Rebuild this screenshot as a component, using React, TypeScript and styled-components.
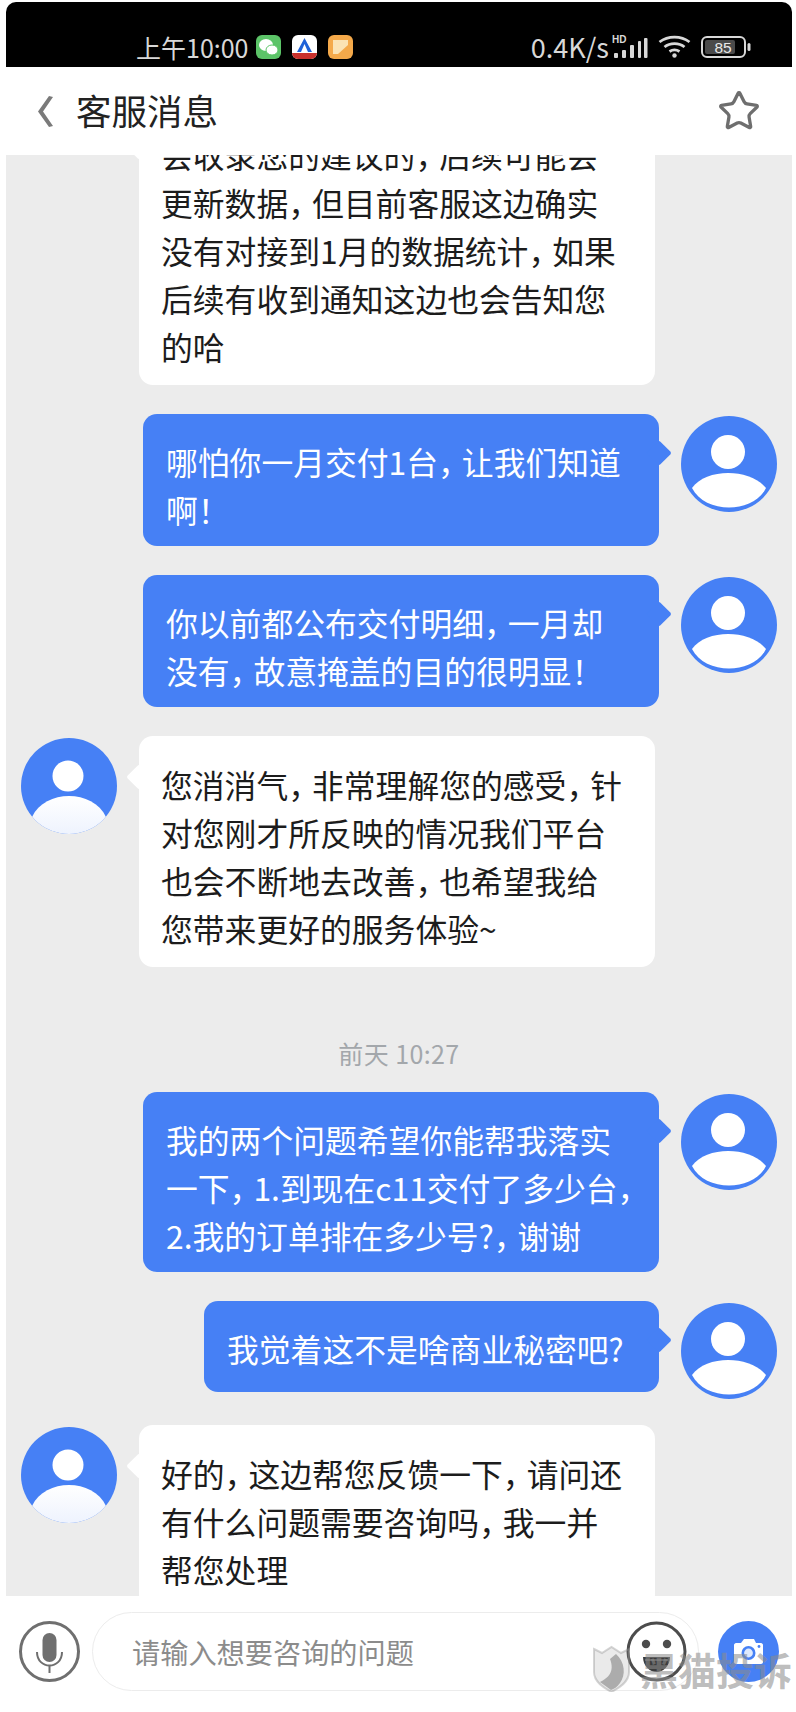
import React from 'react';
import styled, { createGlobalStyle } from 'styled-components';
import { Star } from 'lucide-react';

const GlobalStyle = createGlobalStyle`
  html, body {
    margin: 0;
    padding: 0;
    background: #fff;
  }
  * {
    box-sizing: border-box;
  }
`;

const FONT = `"Noto Sans CJK SC", "Noto Sans", sans-serif`;
const BLUE = '#4680f5';

const Page = styled.div`
  position: relative;
  width: 796px;
  height: 1712px;
  padding: 2px 4px 0 6px;
  display: flex;
  flex-direction: column;
  overflow: hidden;
  background: #fff;
  font-family: ${FONT};
`;
const StatusBar = styled.div`
  height: 65px;
  flex-shrink: 0;
  padding: 24px 41px 0 130px;
  display: flex;
  align-items: center;
  background: #000;
  border-radius: 10px 10px 0 0;
  color: #d8d8d8;
`;
const Clock = styled.span`
  font-size: 25px;
  line-height: 34px;
`;
const AppIcons = styled.div`
  display: flex;
  gap: 11px;
  margin-left: 8px;
`;
const AppIcon = styled.div<{ $bg: string }>`
  width: 25px;
  height: 24px;
  border-radius: 6px;
  background: ${p => p.$bg};
  overflow: hidden;
`;
const StatusRight = styled.div`
  margin-left: auto;
  display: flex;
  align-items: center;
  gap: 10px;
`;
const Speed = styled.span`
  margin-right: -7px;
  font-size: 27px;
  line-height: 34px;
`;
const Header = styled.div`
  height: 88px;
  flex-shrink: 0;
  padding: 0 31px 0 32px;
  display: flex;
  align-items: center;
  background: #fff;
`;
const Title = styled.h1`
  margin: 0 auto 2px 23px;
  font-size: 35.5px;
  line-height: 48px;
  font-weight: 400;
  color: #222;
`;
const Chat = styled.div`
  flex: 1;
  min-height: 0;
  overflow: hidden;
  background: #ececec;
`;
const MessageList = styled.div`
  margin-top: -49px;
  padding: 0 15px;
  display: flex;
  flex-direction: column;
  gap: 29px;
`;
const Row = styled.div<{ $mine?: boolean }>`
  display: flex;
  flex-direction: ${p => (p.$mine ? 'row-reverse' : 'row')};
  align-items: flex-start;
  gap: 22px;
`;
const AvatarSlot = styled.div`
  width: 96px;
  height: 96px;
  margin: 2px 0 -3px;
  flex-shrink: 0;
`;
const Bubble = styled.div<{ $mine?: boolean; $short?: boolean }>`
  position: relative;
  width: ${p => (p.$short ? '455px' : '516px')};
  min-height: 91px;
  padding: ${p => (p.$mine ? '23px 23px 13px' : '24px 22px 15px')};
  border-radius: 14px;
  background: ${p => (p.$mine ? BLUE : '#fff')};
  color: ${p => (p.$mine ? '#fff' : '#1c1c1c')};
  font-size: 31.8px;
  line-height: 48px;
  white-space: nowrap;

  &::after {
    content: '';
    position: absolute;
    top: ${p => (p.$mine ? '30px' : '32px')};
    ${p => (p.$mine ? 'right: -9px;' : 'left: -9px;')}
    width: 18px;
    height: 18px;
    background: inherit;
    transform: rotate(45deg);
    border-radius: 2px;
  }
`;
const Line = styled.div``;
const Comma = styled.span`
  letter-spacing: -8px;
`;
const TimeStamp = styled.div`
  margin-top: 47px;
  text-align: center;
  font-size: 25px;
  line-height: 20px;
  color: #a3a7ab;
  letter-spacing: 0.4px;
`;
const InputBar = styled.div`
  height: 116px;
  flex-shrink: 0;
  padding: 16px 0 0 13px;
  display: flex;
  align-items: flex-start;
  background: #fff;
`;
const RoundIcon = styled.div`
  width: 61px;
  height: 61px;
  margin-top: 9px;
  flex-shrink: 0;
`;
const InputPill = styled.div`
  position: relative;
  width: 607px;
  height: 79px;
  margin: 0 19px 0 12px;
  padding-left: 39px;
  display: flex;
  align-items: center;
  border: 1px solid #ececec;
  border-radius: 40px;
  background: #fff;
  font-size: 28.2px;
  color: #8c8c8c;
`;
const EmojiSlot = styled.div`
  position: absolute;
  top: 8px;
  right: 11px;
  width: 61px;
  height: 61px;
`;
const Watermark = styled.div`
  position: absolute;
  left: 593px;
  top: 1645px;
  display: flex;
  align-items: center;
  gap: 10px;
  color: rgba(140, 140, 140, 0.58);
  font-size: 38px;
  font-weight: 700;
  line-height: 47px;
  white-space: nowrap;
`;

const Avatar = ({ mine }: { mine?: boolean }) => {
  const id = mine ? 'fade-mine' : 'fade-agent';
  return (
    <svg width="96" height="96" viewBox="0 0 96 96">
      <defs>
        <linearGradient id={id} x1="0" y1="0" x2="0" y2="1">
          <stop offset="0" stopColor="#fff" />
          <stop offset="1" stopColor={mine ? '#fff' : '#eef3fe'} />
        </linearGradient>
        <clipPath id={`${id}-clip`}>
          <circle cx="48" cy="48" r="48" />
        </clipPath>
      </defs>
      <circle cx="48" cy="48" r="48" fill={BLUE} />
      {mine ? (
        <>
          <circle cx="47" cy="36" r="17" fill="#fff" />
          <path d="M11 72 C25 52 69 52 85 72 C72 98 24 98 11 72 Z" fill={`url(#${id})`} />
        </>
      ) : (
        <>
          <circle cx="47" cy="38" r="15.5" fill="#fff" />
          <path
            d="M11 79 C24 51 72 51 85 79 L85 96 L11 96 Z"
            fill={`url(#${id})`}
            clipPath={`url(#${id}-clip)`}
          />
        </>
      )}
    </svg>
  );
};

// the reference's font sets the full-width comma tighter than Noto does
const renderLine = (line: string) =>
  line.split('，').map((part, i) => (
    <React.Fragment key={i}>
      {i > 0 && <Comma>，</Comma>}
      {part}
    </React.Fragment>
  ));

const Message = ({ lines, mine, short, noAvatar }: { lines: string[]; mine?: boolean; short?: boolean; noAvatar?: boolean }) => (
  <Row $mine={mine}>
    <AvatarSlot>{!noAvatar && <Avatar mine={mine} />}</AvatarSlot>
    <Bubble $mine={mine} $short={short}>
      {lines.map(l => (
        <Line key={l}>{renderLine(l)}</Line>
      ))}
    </Bubble>
  </Row>
);

const Signal = () => (
  <svg width="36" height="24" viewBox="0 0 36 24" fill="#d8d8d8">
    <text x="0" y="8" fontSize="10" fontFamily="Liberation Sans, sans-serif" fontWeight="700">HD</text>
    <rect x="2" y="18" width="4" height="5" rx="1" />
    <rect x="10" y="15" width="4" height="8" rx="1" />
    <rect x="18" y="10" width="4" height="13" rx="1" />
    <rect x="26" y="6" width="3" height="17" rx="1" />
    <rect x="32" y="3" width="3.5" height="20" rx="1" />
  </svg>
);

const Wifi = () => (
  <svg width="33" height="23" viewBox="0 0 33 23" fill="none" stroke="#d8d8d8" strokeWidth="2.8">
    <path d="M1.5 7 C10 0.5 23 0.5 31.5 7" />
    <path d="M6.5 12 C12 7.5 21 7.5 26.5 12" />
    <path d="M11.5 16.5 C14.5 14.5 18.5 14.5 21.5 16.5" />
    <circle cx="16.5" cy="20.5" r="2.2" fill="#d8d8d8" stroke="none" />
  </svg>
);

const Battery = () => (
  <svg width="50" height="22" viewBox="0 0 50 22">
    <rect x="1" y="1" width="43" height="20" rx="5" fill="none" stroke="#d8d8d8" strokeWidth="2" />
    <rect x="4" y="4" width="30" height="14" rx="2" fill="#4a4a4a" />
    <rect x="46.5" y="7" width="3" height="8" rx="1.5" fill="#d8d8d8" />
    <text x="22" y="17" fontSize="15.5" textAnchor="middle" fill="#e8e8e8" fontFamily="Liberation Sans, sans-serif">85</text>
  </svg>
);

const BackIcon = () => (
  <svg width="15" height="31" viewBox="0 0 15 31">
    <polygon points="11,0 15,1 5,15.5 15,30 11,31 0,15.5" fill="#7a7a7a" />
  </svg>
);

const MicIcon = () => (
  <svg width="61" height="61" viewBox="0 0 61 61" fill="none" stroke="#6f6f6f" strokeWidth="3">
    <circle cx="30.5" cy="30.5" r="29" />
    <rect x="23.5" y="12" width="14" height="29" rx="7" fill="#6f6f6f" stroke="none" />
    <path d="M18 31 C18 49 43 49 43 31" strokeWidth="2" />
    <path d="M30.5 44 V52" strokeWidth="2" />
  </svg>
);

const SmileIcon = () => (
  <svg width="61" height="61" viewBox="0 0 61 61" fill="none">
    <circle cx="30.5" cy="30.5" r="28.5" stroke="#4c4c4c" strokeWidth="3" />
    <circle cx="20" cy="23" r="4.2" fill="#4c4c4c" />
    <circle cx="41" cy="23" r="4.2" fill="#4c4c4c" />
    <path d="M17 36 H44 C44 45 37 51 30.5 51 C24 51 17 45 17 36 Z" fill="#3c3c3c" />
    <path d="M19 39 H42" stroke="#777" strokeWidth="1.5" />
  </svg>
);

const CameraIcon = () => (
  <svg width="61" height="61" viewBox="0 0 61 61">
    <circle cx="30.5" cy="30.5" r="30.5" fill={BLUE} />
    <path d="M18 22 H23 L26 18 H36 L38 22 H43 C44 22 45 23 45 24 V41 C45 42 44 43 43 43 H18 C17 43 16 42 16 41 V24 C16 23 17 22 18 22 Z" fill="#fff" />
    <circle cx="30.5" cy="32" r="7" fill={BLUE} />
    <circle cx="30.5" cy="32" r="4.4" fill="#dfe9fd" />
    <circle cx="41" cy="25.5" r="1.4" fill={BLUE} />
  </svg>
);

const Shield = () => (
  <svg width="37" height="47" viewBox="0 0 37 47">
    <path d="M1 4 L9 8 L18.5 2 L28 8 L36 4 V27 C36 37 26 43 18.5 47 C11 43 1 37 1 27 Z" fill="rgba(150,150,150,0.2)" stroke="rgba(150,150,150,0.4)" strokeWidth="2" />
    <path d="M7 37 C15 33 22 27 17 14 L23 9 C32 17 33 30 27 38 C24 42 21 44 18 45 Z" fill="rgba(130,130,130,0.6)" />
  </svg>
);

const App = () => {
  return (
    <Page>
      <GlobalStyle />
      <StatusBar>
        <Clock>上午10:00</Clock>
        <AppIcons>
          <AppIcon $bg="#5cc468">
            <svg width="25" height="24" viewBox="0 0 25 24">
              <ellipse cx="10" cy="10" rx="7" ry="6" fill="#fff" />
              <ellipse cx="16" cy="15" rx="6" ry="5" fill="#fff" stroke="#5cc468" />
            </svg>
          </AppIcon>
          <AppIcon $bg="#fff">
            <svg width="25" height="24" viewBox="0 0 25 24">
              <path d="M12.5 3 L20 17 H16 L12.5 9 L9 17 H5 Z" fill="#1f62d8" />
              <rect y="18" width="25" height="6" fill="#c9302c" />
            </svg>
          </AppIcon>
          <AppIcon $bg="#f4a94a">
            <svg width="25" height="24" viewBox="0 0 25 24">
              <path d="M5 5 H20 V10 L10 19 H5 Z" fill="#fbe3b4" />
            </svg>
          </AppIcon>
        </AppIcons>
        <StatusRight>
          <Speed>0.4K/s</Speed>
          <Signal />
          <Wifi />
          <Battery />
        </StatusRight>
      </StatusBar>
      <Header>
        <BackIcon />
        <Title>客服消息</Title>
        <Star size={44} strokeWidth={1.8} color="#6e6e6e" />
      </Header>
      <Chat>
        <MessageList>
          <Message
            noAvatar
            lines={[
              '会收录您的建议的，后续可能会',
              '更新数据，但目前客服这边确实',
              '没有对接到1月的数据统计，如果',
              '后续有收到通知这边也会告知您',
              '的哈',
            ]}
          />
          <Message mine lines={['哪怕你一月交付1台，让我们知道', '啊！']} />
          <Message mine lines={['你以前都公布交付明细，一月却', '没有，故意掩盖的目的很明显！']} />
          <Message
            lines={[
              '您消消气，非常理解您的感受，针',
              '对您刚才所反映的情况我们平台',
              '也会不断地去改善，也希望我给',
              '您带来更好的服务体验~',
            ]}
          />
          <TimeStamp>前天 10:27</TimeStamp>
          <Message
            mine
            lines={['我的两个问题希望你能帮我落实', '一下，1.到现在c11交付了多少台，', '2.我的订单排在多少号?，谢谢']}
          />
          <Message mine short lines={['我觉着这不是啥商业秘密吧?']} />
          <Message lines={['好的，这边帮您反馈一下，请问还', '有什么问题需要咨询吗，我一并', '帮您处理', ' ']} />
        </MessageList>
      </Chat>
      <InputBar>
        <RoundIcon>
          <MicIcon />
        </RoundIcon>
        <InputPill>
          请输入想要咨询的问题
          <EmojiSlot>
            <SmileIcon />
          </EmojiSlot>
        </InputPill>
        <RoundIcon>
          <CameraIcon />
        </RoundIcon>
      </InputBar>
      <Watermark>
        <Shield />
        黑猫投诉
      </Watermark>
    </Page>
  );
};

export default App;
